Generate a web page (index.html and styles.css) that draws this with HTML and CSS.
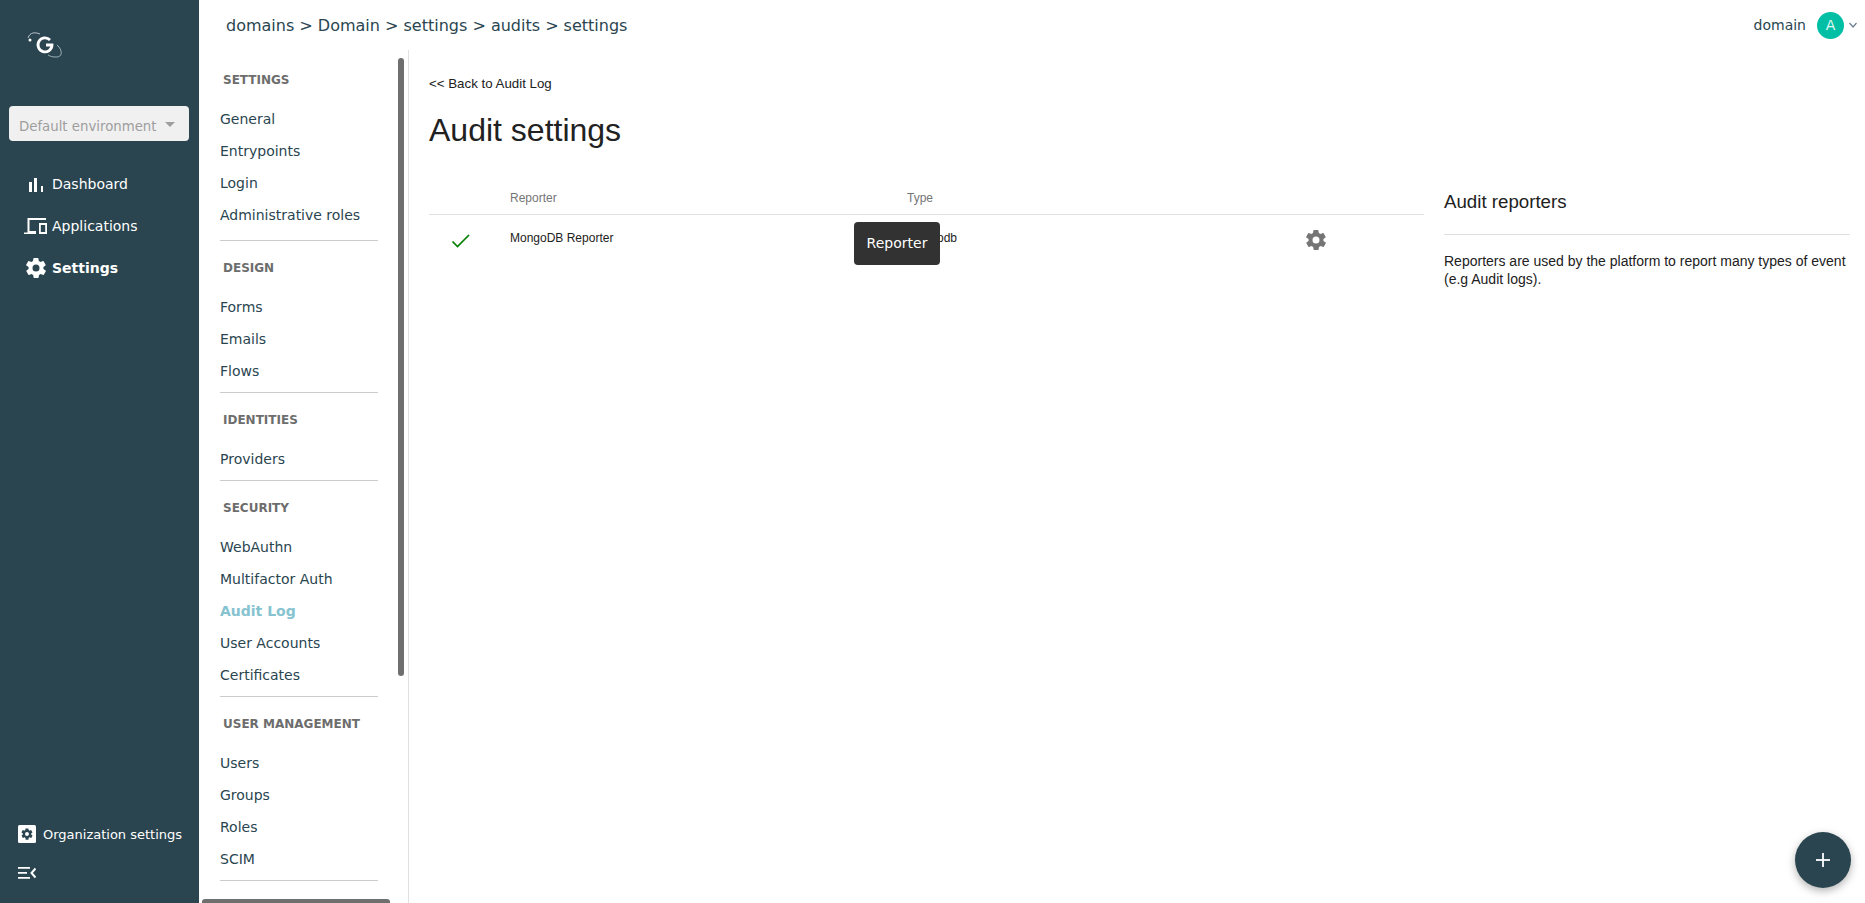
FILE: index.html
```html
<!DOCTYPE html>
<html>

<head>
  <meta name="viewport" content="width=device-width, initial-scale=1.0">
  <link rel="stylesheet" href="styles.css">
</head>

<body>
  <div class="app">
    <aside class="sidenav">
      <div class="logo">
        <svg width="40" height="30" viewBox="0 0 40 30">
          <path d="M3 8 C5 2 10 2 15 4" fill="none" stroke="#b9c6cb" stroke-width="1"/>
          <circle cx="5" cy="10" r="1.500" fill="#fff"/>
          <path d="M25 10 A7 7 0 1 0 27 15 L21 15" fill="none" stroke="#fff" stroke-width="2.800"/>
          <path d="M32 15 C38 20 38 28 30 27 C27 27 25 26 23 25" fill="none" stroke="#9fb0b6" stroke-width="1"/>
        </svg>
      </div>
      <div class="env-select">
        <span>Default environment</span>
        <i class="caret"></i>
      </div>
      <nav class="main-nav">
        <a class="main-link">
          <svg width="24" height="24" viewBox="0 0 24 24" fill="#fff"><path d="M5 10h3v10H5zM10 6h3v14h-3zM17 14h2v6h-2z"/></svg>
          <span>Dashboard</span>
        </a>
        <a class="main-link">
          <svg width="24" height="24" viewBox="0 0 24 24" fill="#fff"><path d="M3.500 4H22v2H5.500v11H12v3H0v-1.500h3.500zM15 9h8v11h-8zm1.800 2v7h4.400v-7z"/></svg>
          <span>Applications</span>
        </a>
        <a class="main-link active">
          <svg width="24" height="24" viewBox="0 0 24 24" fill="#fff"><path d="M19.400 13a7.500 7.500 0 0 0 0-2l2.100-1.600a.5.5 0 0 0 .1-.6l-2-3.500a.5.5 0 0 0-.6-.2l-2.500 1a7.300 7.300 0 0 0-1.700-1l-.4-2.700a.5.500 0 0 0-.5-.4h-4a.5.500 0 0 0-.5.400l-.4 2.700a7.300 7.300 0 0 0-1.700 1l-2.500-1a.5.500 0 0 0-.6.200l-2 3.500a.5.500 0 0 0 .1.600L4.600 11a7.500 7.500 0 0 0 0 2l-2.100 1.600a.5.500 0 0 0-.1.600l2 3.500a.5.500 0 0 0 .6.200l2.500-1a7.300 7.300 0 0 0 1.700 1l.4 2.700a.5.500 0 0 0 .5.400h4a.5.500 0 0 0 .5-.4l.4-2.700a7.300 7.300 0 0 0 1.700-1l2.500 1a.5.500 0 0 0 .6-.2l2-3.500a.5.500 0 0 0-.1-.6zM12 15.500a3.500 3.500 0 1 1 0-7 3.500 3.500 0 0 1 0 7z"/></svg>
          <span>Settings</span>
        </a>
      </nav>
      <div class="sidenav-bottom">
        <a class="org-link">
          <svg width="18" height="18" viewBox="0 0 18 18"><rect width="18" height="18" rx="1.500" fill="#fff"/><path transform="translate(2.250 2.250) scale(.5625)" fill="#2a4550" d="M19.400 13a7.500 7.500 0 0 0 0-2l2.100-1.600a.5.5 0 0 0 .1-.6l-2-3.500a.5.5 0 0 0-.6-.2l-2.500 1a7.300 7.300 0 0 0-1.700-1l-.4-2.700a.5.500 0 0 0-.5-.4h-4a.5.500 0 0 0-.5.400l-.4 2.700a7.300 7.300 0 0 0-1.700 1l-2.500-1a.5.500 0 0 0-.6.200l-2 3.500a.5.500 0 0 0 .1.600L4.600 11a7.500 7.500 0 0 0 0 2l-2.100 1.600a.5.500 0 0 0-.1.600l2 3.500a.5.500 0 0 0 .6.200l2.500-1a7.300 7.300 0 0 0 1.700 1l.4 2.700a.5.500 0 0 0 .5.400h4a.5.500 0 0 0 .5-.4l.4-2.700a7.300 7.300 0 0 0 1.700-1l2.500 1a.5.500 0 0 0 .6-.2l2-3.500a.5.500 0 0 0-.1-.6zM12 15.500a3.500 3.500 0 1 1 0-7 3.500 3.500 0 0 1 0 7z"/></svg>
          <span>Organization settings</span>
        </a>
        <a class="collapse-btn">
          <svg width="18" height="14" viewBox="0 0 18 14" fill="#fff"><path d="M0 1h12v1.800H0zM0 6h9v1.800H0zM0 11h12v1.800H0z"/><path d="M17.500 2.500 13.500 7l4 4.500" fill="none" stroke="#fff" stroke-width="2"/></svg>
        </a>
      </div>
    </aside>

    <div class="page">
      <header class="topbar">
        <div class="breadcrumb">domains &gt; Domain &gt; settings &gt; audits &gt; settings</div>
        <div class="user">
          <span>domain</span>
          <span class="avatar">A</span>
          <svg width="8" height="6" viewBox="0 0 8 6"><path d="M.5 1l3.500 4 3.500-4" fill="none" stroke="#6b7c93" stroke-width="1.200"/></svg>
        </div>
      </header>

      <div class="body-row">
        <div class="subnav">
          <div class="sub-group first">
            <h4>SETTINGS</h4>
            <a>General</a>
            <a>Entrypoints</a>
            <a>Login</a>
            <a>Administrative roles</a>
          </div>
          <div class="sub-group">
            <h4>DESIGN</h4>
            <a>Forms</a>
            <a>Emails</a>
            <a>Flows</a>
          </div>
          <div class="sub-group">
            <h4>IDENTITIES</h4>
            <a>Providers</a>
          </div>
          <div class="sub-group">
            <h4>SECURITY</h4>
            <a>WebAuthn</a>
            <a>Multifactor Auth</a>
            <a class="current">Audit Log</a>
            <a>User Accounts</a>
            <a>Certificates</a>
          </div>
          <div class="sub-group">
            <h4>USER MANAGEMENT</h4>
            <a>Users</a>
            <a>Groups</a>
            <a>Roles</a>
            <a>SCIM</a>
          </div>
          <div class="scroll-v"></div>
          <div class="scroll-h"></div>
        </div>

        <main class="content">
          <a class="back-link">&lt;&lt; Back to Audit Log</a>
          <h1>Audit settings</h1>
          <div class="columns">
            <div class="table-wrap">
              <div class="row head-row">
                <div class="cell-status"></div>
                <div class="cell-name">Reporter</div>
                <div class="cell-type">Type</div>
              </div>
              <div class="row">
                <div class="cell-status">
                  <svg width="20" height="16" viewBox="0 0 20 16"><path d="M1.500 8.500l5 5L18 2" fill="none" stroke="#008000" stroke-width="1.700"/></svg>
                </div>
                <div class="cell-name">MongoDB Reporter</div>
                <div class="cell-type">mongodb</div>
                <div class="cell-action">
                  <svg width="24" height="24" viewBox="0 0 24 24" fill="#757575"><path d="M19.400 13a7.500 7.500 0 0 0 0-2l2.100-1.600a.5.5 0 0 0 .1-.6l-2-3.500a.5.5 0 0 0-.6-.2l-2.500 1a7.300 7.300 0 0 0-1.700-1l-.4-2.700a.5.500 0 0 0-.5-.4h-4a.5.500 0 0 0-.5.400l-.4 2.700a7.300 7.300 0 0 0-1.700 1l-2.500-1a.5.500 0 0 0-.6.200l-2 3.500a.5.500 0 0 0 .1.600L4.600 11a7.500 7.500 0 0 0 0 2l-2.100 1.600a.5.500 0 0 0-.1.600l2 3.500a.5.500 0 0 0 .6.200l2.500-1a7.300 7.300 0 0 0 1.700 1l.4 2.700a.5.500 0 0 0 .5.400h4a.5.500 0 0 0 .5-.4l.4-2.700a7.300 7.300 0 0 0 1.700-1l2.500 1a.5.500 0 0 0 .6-.2l2-3.500a.5.500 0 0 0-.1-.6zM12 15.500a3.500 3.500 0 1 1 0-7 3.500 3.500 0 0 1 0 7z"/></svg>
                </div>
              </div>
              <div class="tooltip">Reporter</div>
            </div>
            <div class="help">
              <h3>Audit reporters</h3>
              <p>Reporters are used by the platform to report many types of event (e.g Audit logs).</p>
            </div>
          </div>
        </main>
      </div>
    </div>
  </div>

  <button class="fab" type="button">
    <svg width="16" height="16" viewBox="0 0 16 16" fill="#fff"><path d="M7.100 1h1.800v14H7.100z"/><path d="M1 7.100h14v1.800H1z"/></svg>
  </button>
</body>

</html>
```

FILE: styles.css
```css
* {
  box-sizing: border-box;
}

html,
body {
  height: 100%;
}

body {
  margin: 0;
  overflow: hidden;
  background-color: white;
  font-family: "DejaVu Sans", sans-serif;
  color: #2a4550;
}

svg {
  display: block;
  flex: none;
}

.app {
  display: flex;
  height: 903px;
}

.sidenav {
  width: 199px;
  flex: none;
  display: flex;
  flex-direction: column;
  background-color: #2a4550;
  color: white;
}

.logo {
  height: 106px;
  padding: 30px 0 0 25px;
}

.env-select {
  margin: 0 10px 0 9px;
  height: 35px;
  display: flex;
  justify-content: space-between;
  padding: 13px 14px 0 10px;
  background-color: #f0f0f0;
  border-radius: 4px;
  font-size: 13.300px;
  line-height: 16px;
  color: #9e9e9e;
}

.caret {
  margin-top: 3px;
  width: 0;
  height: 0;
  border-left: 5px solid transparent;
  border-right: 5px solid transparent;
  border-top: 5px solid #9e9e9e;
}

.main-nav {
  margin-top: 22px;
}

.main-link {
  height: 42px;
  display: flex;
  align-items: center;
  gap: 4px;
  padding-left: 24px;
  font-size: 14px;
}

.main-link.active {
  font-weight: bold;
}

.sidenav-bottom {
  margin-top: auto;
  padding: 0 0 23px 18px;
}

.org-link {
  display: flex;
  align-items: center;
  gap: 7px;
  font-size: 13px;
  margin-bottom: 23px;
}

.collapse-btn {
  display: block;
}

.page {
  flex: 1;
  min-width: 0;
  display: flex;
  flex-direction: column;
}

.topbar {
  height: 50px;
  flex: none;
  display: flex;
  justify-content: space-between;
  align-items: center;
  padding: 0 8px 0 27px;
}

.breadcrumb {
  font-size: 16px;
}

.user {
  display: flex;
  align-items: center;
  font-size: 14px;
}

.avatar {
  width: 27px;
  height: 27px;
  margin: 0 5px 0 11px;
  border-radius: 50%;
  background-color: #00bfa5;
  color: #e0f7f2;
  text-align: center;
  line-height: 27px;
  font-size: 14px;
}

.body-row {
  flex: 1;
  min-height: 0;
  display: flex;
}

.subnav {
  position: relative;
  width: 210px;
  flex: none;
  overflow: hidden;
  border-right: 1px solid #e0e0e0;
  padding-left: 21px;
}

.sub-group {
  width: 158px;
  border-bottom: 1px solid #ccc;
  padding-bottom: 5px;
}

.sub-group.first {
  margin-top: 3px;
  padding-bottom: 9px;
}

.sub-group h4 {
  margin: 0;
  padding: 20px 0 0 3px;
  height: 50px;
  font-size: 12px;
  line-height: 14px;
  color: #6d6d6d;
}

.sub-group a {
  display: block;
  height: 32px;
  line-height: 32px;
  font-size: 14px;
  white-space: nowrap;
}

.sub-group a.current {
  color: #86c3d0;
  font-weight: bold;
}

.scroll-v {
  position: absolute;
  left: 199px;
  top: 8px;
  width: 6px;
  height: 618px;
  border-radius: 3px;
  background-color: #6f6f6f;
}

.scroll-h {
  position: absolute;
  left: 3px;
  bottom: 0;
  width: 188px;
  height: 4px;
  border-radius: 3px 3px 0 0;
  background-color: #6f6f6f;
}

.content {
  flex: 1;
  min-width: 0;
  padding: 26px 15px 0 20px;
  font-family: "Liberation Sans", sans-serif;
  color: #212121;
}

.back-link {
  display: block;
  font-size: 13.300px;
  line-height: 16px;
}

h1 {
  margin: 18px 0 0;
  font-size: 32px;
  font-weight: normal;
  line-height: 40px;
}

.columns {
  margin-top: 32px;
  display: flex;
  gap: 20px;
}

.table-wrap {
  position: relative;
  width: 995px;
  flex: none;
}

.row {
  display: flex;
  font-size: 12px;
  line-height: 16px;
  padding-top: 15px;
}

.head-row {
  height: 33px;
  padding-top: 8px;
  border-bottom: 1px solid #e0e0e0;
  color: #757575;
}

.cell-status {
  width: 81px;
  padding-left: 22px;
}

.cell-status svg {
  margin-top: 3px;
}

.cell-name {
  width: 397px;
}

.cell-type {
  width: 397px;
}

.cell-action {
  margin-top: -2px;
}

.tooltip {
  position: absolute;
  left: 425px;
  top: 40px;
  width: 86px;
  height: 43px;
  border-radius: 4px;
  background-color: #323232;
  color: white;
  text-align: center;
  line-height: 43px;
  font-family: "DejaVu Sans", sans-serif;
  font-size: 14px;
}

.help {
  flex: 1;
  min-width: 0;
}

.help h3 {
  margin: 0;
  padding-top: 9px;
  height: 53px;
  border-bottom: 1px solid #e0e0e0;
  font-size: 18.700px;
  font-weight: normal;
  line-height: 22px;
}

.help p {
  margin: 17px 0 0;
  font-size: 14px;
  line-height: 18px;
}

.fab {
  position: fixed;
  right: 14px;
  bottom: 15px;
  width: 56px;
  height: 56px;
  display: flex;
  align-items: center;
  justify-content: center;
  border: none;
  border-radius: 50%;
  background-color: #2a4550;
  box-shadow: 0 3px 8px rgba(0, 0, 0, .3);
}
```
